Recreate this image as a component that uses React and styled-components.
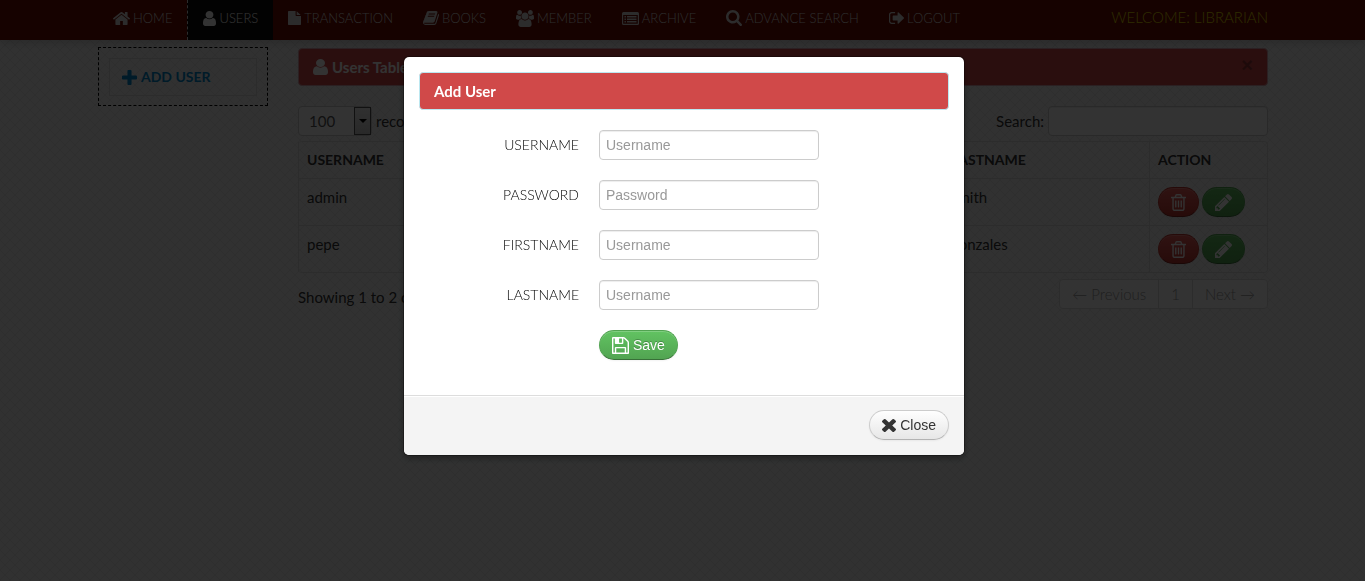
import React from 'react';
import styled, { createGlobalStyle, css } from 'styled-components';

const GlobalStyle = createGlobalStyle`
  *, *::before, *::after {
    box-sizing: border-box;
  }

  body {
    margin: 0;
    min-height: 100vh;
    background-color: #f5f6f6;
    background-image:
      linear-gradient(45deg, transparent 46%, rgba(0, 0, 0, 0.07) 46% 54%, transparent 54%),
      linear-gradient(-45deg, transparent 46%, rgba(0, 0, 0, 0.07) 46% 54%, transparent 54%);
    background-size: 10px 10px;
    color: #333;
    font-family: 'Century Gothic', Lato, sans-serif;
    font-size: 14px;
    line-height: 20px;
  }
`;

// Icons, each cropped to its own glyph box
const ICONS = {
  home: {
    box: '90 250 1612 1290',
    d: 'M1472 992v480q0 26-19 45t-45 19h-384v-384h-256v384h-384q-26 0-45-19t-19-45v-480q0-1 .5-3t.5-3l575-474 575 474q1 2 1 6zm223-69l-62 74q-8 9-21 11h-3q-13 0-21-7l-692-577-692 577q-12 8-24 7-13-2-21-11l-62-74q-8-10-7-23.5t11-21.5l719-599q32-26 76-26t76 26l244 204v-195q0-14 9-23t23-9h192q14 0 23 9t9 23v408l219 182q10 8 11 21.5t-7 23.5z',
  },
  user: {
    box: '256 128 1280 1536',
    d: 'M1536 1399q0 109-62.5 187t-150.5 78h-854q-88 0-150.5-78t-62.5-187q0-85 8.5-160.5t31.5-152 58.5-131 94-89 134.5-34.5q131 128 313 128t313-128q76 0 134.5 34.5t94 89 58.5 131 31.5 152 8.5 160.5zm-256-887q0 159-112.5 271.5t-271.5 112.5-271.5-112.5-112.5-271.5 112.5-271.5 271.5-112.5 271.5 112.5 112.5 271.5z',
  },
  file: {
    box: '128 0 1536 1792',
    d: 'M1152 512v-472q22 14 36 28l408 408q14 14 28 36h-472zm-128 32q0 40 28 68t68 28h544v1056q0 40-28 68t-68 28h-1344q-40 0-68-28t-28-68v-1600q0-40 28-68t68-28h800v544z',
  },
  book: {
    box: '60 120 1670 1550',
    d: 'M1703 478q40 57 18 129l-275 906q-19 64-76.5 107.5t-122.5 43.5h-923q-77 0-148.5-53.5t-99.5-131.5q-24-67-2-127 0-4 3-27t4-37q1-8-3-21.5t-3-19.5q2-11 8-21t16.5-23.5 16.5-23.5q23-38 45-91.5t30-91.5q3-10 .5-30t-.5-28q3-11 17-28t17-23q21-36 42-92t25-90q1-9-2.5-32t.5-28q4-13 22-30.5t22-22.5q19-26 42.5-84.5t27.5-96.5q1-8-3-25.5t-2-26.5q2-8 9-18t18-23 17-21q8-12 16.5-30.5t15-35 16-36 19.5-32 26.5-23.5 36-11.5 47.5 5.5l-1 3q38-9 51-9h761q74 0 114 56t18 130l-274 906q-36 119-71.5 153.5t-128.5 34.5h-869q-27 0-38 15-11 16-1 43 24 70 144 70h923q29 0 56-15.5t35-41.5l300-987q7-22 5-57 38 15 59 43zm-1064 2q-4 13 2 22.5t20 9.5h608q13 0 25.5-9.5t16.5-22.5l21-64q4-13-2-22.5t-20-9.5h-608q-13 0-25.5 9.5t-16.5 22.5zm-83 256q-4 13 2 22.5t20 9.5h608q13 0 25.5-9.5t16.5-22.5l21-64q4-13-2-22.5t-20-9.5h-608q-13 0-25.5 9.5t-16.5 22.5z',
  },
  group: {
    box: '0 0 1920 1792',
    d: 'M593 896q-162 5-265 128h-134q-82 0-138-40.5t-56-118.5q0-353 124-353 6 0 43.5 21t97.5 42.5 119 21.5q67 0 133-23-5 37-5 66 0 139 81 256zm1071 637q0 120-73 189.5t-194 69.5h-874q-121 0-194-69.5t-73-189.5q0-53 3.5-103.5t14-109 26.5-108.5 43-97.5 62-81 85.5-53.5 111.5-20q10 0 43 21.5t73 48 107 48 135 21.5 135-21.5 107-48 73-48 43-21.5q61 0 111.5 20t85.5 53.5 62 81 43 97.5 26.5 108.5 14 109 3.5 103.5zm-1024-1277q0 106-75 181t-181 75-181-75-75-181 75-181 181-75 181 75 75 181zm704 384q0 159-112.5 271.5t-271.5 112.5-271.5-112.5-112.5-271.5 112.5-271.5 271.5-112.5 271.5 112.5 112.5 271.5zm576 225q0 78-56 118.5t-138 40.5h-134q-103-123-265-128 81-117 81-256 0-29-5-66 66 23 133 23 59 0 119-21.5t97.5-42.5 43.5-21q124 0 124 353zm-128-609q0 106-75 181t-181 75-181-75-75-181 75-181 181-75 181 75 75 181z',
  },
  list: {
    box: '0 0 17 13',
    d: 'M1.500 0h14a1.500 1.500 0 0 1 1.500 1.500v10a1.500 1.500 0 0 1-1.500 1.500h-14a1.500 1.500 0 0 1-1.500-1.500v-10a1.500 1.500 0 0 1 1.500-1.500zM1.200 3v8.300q0 .5.5.5h13.600q.5 0 .5-.5v-8.300zM2.500 4h1.400v1.400h-1.400zM5 4h9.500v1.400h-9.500zM2.500 6.500h1.400v1.400h-1.400zM5 6.500h9.500v1.400h-9.500zM2.500 9h1.400v1.400h-1.400zM5 9h9.500v1.400h-9.500z',
  },
  search: {
    box: '64 128 1664 1664',
    d: 'M1216 832q0-185-131.500-316.500t-316.500-131.500-316.500 131.500-131.500 316.500 131.500 316.500 316.500 131.500 316.500-131.500 131.500-316.500zm512 832q0 52-38 90t-90 38q-54 0-90-38l-343-342q-179 124-399 124-143 0-273.500-55.500t-225-150-150-225-55.500-273.500 55.500-273.500 150-225 225-150 273.500-55.500 273.500 55.500 225 150 150 225 55.500 273.500q0 220-124 399l343 343q37 37 37 90z',
  },
  signOut: {
    box: '64 256 1568 1280',
    d: 'M704 1440q0 4 1 20t.5 26.500-3 23.500-10 19.500-20.500 6.500h-320q-119 0-203.500-84.500t-84.500-203.500v-704q0-119 84.500-203.500t203.500-84.500h320q13 0 22.500 9.500t9.500 22.500q0 4 1 20t.5 26.500-3 23.500-10 19.500-20.500 6.500h-320q-66 0-113 47t-47 113v704q0 66 47 113t113 47h312l11.500 1 11.500 3 8 5.500 7 9 2 13.500zm928-544q0 26-19 45l-544 544q-19 19-45 19t-45-19-19-45v-288h-448q-26 0-45-19t-19-45v-384q0-26 19-45t45-19h448v-288q0-26 19-45t45-19 45 19l544 544q19 19 19 45z',
  },
  plus: {
    box: '192 128 1408 1408',
    d: 'M1600 736v192q0 40-28 68t-68 28h-416v416q0 40-28 68t-68 28h-192q-40 0-68-28t-28-68v-416h-416q-40 0-68-28t-28-68v-192q0-40 28-68t68-28h416v-416q0-40 28-68t68-28h192q40 0 68 28t28 68v416h416q40 0 68 28t28 68z',
  },
  remove: {
    box: '302 366 1188 1188',
    d: 'M1490 1322q0 40-28 68l-136 136q-28 28-68 28t-68-28l-294-294-294 294q-28 28-68 28t-68-28l-136-136q-28-28-28-68t28-68l294-294-294-294q-28-28-28-68t28-68l136-136q28-28 68-28t68 28l294 294 294-294q28-28 68-28t68 28l136 136q28 28 28 68t-28 68l-294 294 294 294q28 28 28 68z',
  },
  save: {
    box: '128 128 1536 1536',
    d: 'M512 1536h768v-384h-768v384zm896 0h128v-896q0-14-10-38.500t-20-34.500l-281-281q-10-10-34-20t-39-10v416q0 40-28 68t-68 28h-576q-40 0-68-28t-28-68v-416h-128v1280h128v-416q0-40 28-68t68-28h832q40 0 68 28t28 68v416zm-384-928v-320q0-13-9.500-22.500t-22.500-9.500h-192q-13 0-22.500 9.500t-9.500 22.500v320q0 13 9.500 22.500t22.500 9.500h192q13 0 22.500-9.500t9.500-22.500zm640 32v928q0 40-28 68t-68 28h-1344q-40 0-68-28t-28-68v-1344q0-40 28-68t68-28h928q40 0 88 20t76 48l280 280q28 28 48 76t20 88z',
  },
  trash: {
    box: '192 128 1408 1536',
    d: 'M704 736v576q0 14-9 23t-23 9h-64q-14 0-23-9t-9-23v-576q0-14 9-23t23-9h64q14 0 23 9t9 23zm256 0v576q0 14-9 23t-23 9h-64q-14 0-23-9t-9-23v-576q0-14 9-23t23-9h64q14 0 23 9t9 23zm256 0v576q0 14-9 23t-23 9h-64q-14 0-23-9t-9-23v-576q0-14 9-23t23-9h64q14 0 23 9t9 23zm128 724v-948h-896v948q0 22 7 40.500t14.500 27 10.500 8.500h832q3 0 10.500-8.500t14.500-27 7-40.500zm-672-1076h448l-48-117q-7-9-17-11h-317q-10 2-17 11zm928 32v64q0 14-9 23t-23 9h-96v948q0 83-47 143.500t-113 60.500h-832q-66 0-113-58.500t-47-141.500v-952h-96q-14 0-23-9t-9-23v-64q0-14 9-23t23-9h309l70-167q15-37 54-63t79-26h320q40 0 79 26t54 63l70 167h309q14 0 23 9t9 23z',
  },
  pencil: {
    box: '128 149 1515 1515',
    d: 'M491 1536l91-91-235-235-91 91v107h128v128h107zm523-928q0-22-22-22-10 0-17 7l-542 542q-7 7-7 17 0 22 22 22 10 0 17-7l542-542q7-7 7-17zm-54-192l416 416-832 832h-416v-416zm683 96q0 53-37 90l-166 166-416-416 166-165q36-38 90-38 53 0 91 38l235 234q37 39 37 91z',
  },
};

const Glyph = styled.svg`
  flex: none;
  fill: currentColor;
`;

const Icon = ({ name, width, height }) => (
  <Glyph
    width={width}
    height={height}
    viewBox={ICONS[name].box}
    preserveAspectRatio="none"
    aria-hidden="true"
  >
    <path fillRule="evenodd" d={ICONS[name].d} />
  </Glyph>
);

// Navigation bar
const Navbar = styled.header`
  background: #6e0c00;
  box-shadow: 0 1px 10px rgba(0, 0, 0, 0.2);
`;

const Container = styled.div`
  display: flex;
  max-width: 1171px;
  margin: 0 auto;
  padding-left: 1px;
`;

const NavList = styled.nav`
  display: flex;
  flex: 1;
`;

const NavLink = styled.a`
  display: flex;
  align-items: center;
  gap: 3px;
  height: 40px;
  padding: 0 15px 4px;
  color: ${({ $active }) => ($active ? '#fff' : '#ddd')};
  font-size: 13px;
  font-weight: 300;
  text-decoration: none;
  white-space: nowrap;

  ${({ $active }) => $active && css`
    background: #0a0a0a;
    border-left: 1px dashed #ddd;
  `}
`;

const Welcome = styled.div`
  color: #e0d800;
  font-size: 15px;
  font-weight: 300;
  line-height: 34px;
  white-space: nowrap;
`;

// Page columns
const Columns = styled(Container)`
  align-items: flex-start;
  gap: 30px;
  padding-top: 7px;
`;

const Sidebar = styled.aside`
  flex: none;
  width: 170px;
  padding: 10px 10px 9px;
  border: 1px dashed #000;
`;

const AddUserLink = styled.a`
  display: flex;
  align-items: center;
  gap: 4px;
  height: 38px;
  padding: 0 12px;
  border: 1px solid #ddd;
  color: #0088cc;
  font-weight: 700;
  text-decoration: none;
`;

const Main = styled.main`
  flex: 1;
  min-width: 0;
  padding-top: 1px;
`;

const Banner = styled.div`
  display: flex;
  align-items: center;
  gap: 4px;
  height: 38px;
  margin-bottom: 20px;
  padding: 0 14px 1px;
  border: 1px solid ${({ $tone }) => ($tone === 'info' ? '#bce8f1' : '#d6a0a8')};
  border-radius: 4px;
  background: #d04949;
  color: #fff;
  font-size: 15px;
  font-weight: 700;
`;

const Dismiss = styled.button`
  margin-left: auto;
  padding: 0 0 4px;
  border: 0;
  background: none;
  color: #000;
  font: bold 20px/20px 'Liberation Sans', sans-serif;
  opacity: 0.3;
`;

const Toolbar = styled.div`
  display: flex;
  justify-content: space-between;
  margin-bottom: 5px;
`;

const Field = styled.label`
  display: flex;
  align-items: center;
  gap: 4px;
  font-size: 15px;
`;

const TextInput = styled.input`
  width: 220px;
  height: 30px;
  padding: 4px 6px;
  border: 1px solid #ccc;
  border-radius: 4px;
  background: #fff;
  box-shadow: inset 0 1px 1px rgba(0, 0, 0, 0.075);
  color: #555;
  font: 14px/20px 'Liberation Sans', sans-serif;

  &::placeholder {
    color: #999;
    opacity: 1;
  }
`;

const SelectBox = styled.span`
  display: flex;
  width: 74px;
  height: 30px;
  border: 1px solid #ccc;
  border-radius: 4px;
  background: #fff;
`;

const Select = styled.select`
  flex: 1;
  min-width: 0;
  padding: 0 10px;
  border: 0;
  appearance: none;
  background: none;
  color: #555;
  font: inherit;
`;

const SelectArrow = styled.span`
  display: grid;
  place-items: center;
  width: 17px;
  border: 1px solid #555;
  background: linear-gradient(#f0f0f0, #ccc);
  color: #000;
`;

// Users table
const Table = styled.table`
  width: 100%;
  border: 1px solid #ddd;
  border-left: 0;
  border-radius: 4px;
  border-spacing: 0;
  table-layout: fixed;
  font-size: 15px;
  text-align: left;
`;

const Cell = styled.td`
  padding: 8px;
  border-left: 1px solid #ddd;
  border-top: 1px solid #ddd;
  vertical-align: top;
`;

const HeadCell = styled.th`
  width: ${({ $width }) => $width || 'auto'};
  padding: 8px;
  border-left: 1px solid #ddd;
  font-size: 14px;
  font-weight: 700;
`;

const Actions = styled.div`
  display: flex;
  gap: 3px;
`;

const BUTTON_TONES = {
  plain: css`
    background: linear-gradient(#fff, #e6e6e6);
    border-color: #ccc #ccc #b3b3b3;
    color: #333;
  `,
  success: css`
    background: linear-gradient(#62c462, #51a351);
    border-color: #51a351 #51a351 #387038;
    color: #fff;
    text-shadow: 0 -1px 0 rgba(0, 0, 0, 0.25);
  `,
  danger: css`
    background: linear-gradient(#ee5f5b, #bd362f);
    border-color: #bd362f #bd362f #802420;
    color: #fff;
  `,
};

const Button = styled.button`
  display: inline-flex;
  align-items: center;
  gap: 4px;
  height: 30px;
  padding: 0 12px;
  border: 1px solid;
  border-radius: 15px;
  box-shadow: inset 0 1px 0 rgba(255, 255, 255, 0.2), 0 1px 2px rgba(0, 0, 0, 0.05);
  font: 14px/20px 'Liberation Sans', sans-serif;
  ${({ $tone }) => BUTTON_TONES[$tone]}
  background-origin: border-box;
`;

const TableFooter = styled.div`
  display: flex;
  justify-content: space-between;
  align-items: flex-start;
  padding-top: 6px;
  font-size: 15px;
`;

const Info = styled.div`
  padding-top: 8px;
`;

const Pager = styled.div`
  display: flex;
  border: 1px solid #ddd;
  border-radius: 4px;
  background: #fff;
`;

const PageLink = styled.a`
  padding: 4px 12px;
  color: #999;
  font-weight: 300;
  line-height: 20px;
  text-decoration: none;

  & + & {
    border-left: 1px solid #ddd;
  }
`;

// Modal
const Backdrop = styled.div`
  position: fixed;
  inset: 0;
  display: flex;
  align-items: flex-start;
  justify-content: center;
  padding: 56px 0 0 3px;
  background: rgba(0, 0, 0, 0.8);
`;

const Modal = styled.div`
  width: 562px;
  border: 1px solid rgba(0, 0, 0, 0.3);
  border-radius: 6px;
  background: #fff;
  background-clip: padding-box;
  box-shadow: 0 3px 7px rgba(0, 0, 0, 0.3);
  overflow: hidden;
`;

const ModalBody = styled.form`
  padding: 15px;
`;

const FormRow = styled.div`
  display: grid;
  grid-template-columns: 160px 1fr;
  column-gap: 20px;
  align-items: center;
  justify-items: start;
  margin-bottom: 20px;
`;

const FormLabel = styled.label`
  justify-self: end;
  color: #000;
  font-weight: 300;
`;

const FormActions = styled.div`
  grid-column: 2;
  display: flex;
`;

const ModalFooter = styled.div`
  display: flex;
  justify-content: flex-end;
  padding: 14px 15px 15px;
  border-top: 1px solid #ddd;
  background: #f4f4f4;
  box-shadow: inset 0 1px 0 #fff;
`;

const NAV_ITEMS = [
  { label: 'HOME', icon: 'home', width: 17, height: 13 },
  { label: 'USERS', icon: 'user', width: 13, height: 15, active: true },
  { label: 'TRANSACTION', icon: 'file', width: 13, height: 14 },
  { label: 'BOOKS', icon: 'book', width: 16, height: 14 },
  { label: 'MEMBER', icon: 'group', width: 18, height: 17 },
  { label: 'ARCHIVE', icon: 'list', width: 17, height: 13 },
  { label: 'ADVANCE SEARCH', icon: 'search', width: 16, height: 16 },
  { label: 'LOGOUT', icon: 'signOut', width: 15, height: 12 },
];

const USERS = [
  { username: 'admin', password: 'admin', firstname: 'john', lastname: 'smith' },
  { username: 'pepe', password: 'pepe', firstname: 'pepe', lastname: 'gonzales' },
];

const FORM_FIELDS = [
  { id: 'username', label: 'USERNAME', placeholder: 'Username' },
  { id: 'password', label: 'PASSWORD', placeholder: 'Password', type: 'password' },
  { id: 'firstname', label: 'FIRSTNAME', placeholder: 'Username' },
  { id: 'lastname', label: 'LASTNAME', placeholder: 'Username' },
];

const UsersTable = () => (
  <Table>
    <thead>
      <tr>
        <HeadCell $width="118px">USERNAME</HeadCell>
        <HeadCell>PASSWORD</HeadCell>
        <HeadCell $width="118px">FIRSTNAME</HeadCell>
        <HeadCell $width="207px">LASTNAME</HeadCell>
        <HeadCell $width="118px">ACTION</HeadCell>
      </tr>
    </thead>
    <tbody>
      {USERS.map((user) => (
        <tr key={user.username}>
          <Cell>{user.username}</Cell>
          <Cell>{user.password}</Cell>
          <Cell>{user.firstname}</Cell>
          <Cell>{user.lastname}</Cell>
          <Cell>
            <Actions>
              <Button type="button" $tone="danger" aria-label="Delete">
                <Icon name="trash" width={15} height={17} />
              </Button>
              <Button type="button" $tone="success" aria-label="Edit">
                <Icon name="pencil" width={17} height={17} />
              </Button>
            </Actions>
          </Cell>
        </tr>
      ))}
    </tbody>
  </Table>
);

const AddUserModal = () => (
  <Backdrop>
    <Modal role="dialog" aria-modal="true" aria-label="Add User">
      <ModalBody>
        <Banner $tone="info">Add User</Banner>
        {FORM_FIELDS.map(({ id, label, placeholder, type = 'text' }) => (
          <FormRow key={id}>
            <FormLabel htmlFor={id}>{label}</FormLabel>
            <TextInput id={id} type={type} placeholder={placeholder} />
          </FormRow>
        ))}
        <FormRow>
          <FormActions>
            <Button type="button" $tone="success">
              <Icon name="save" width={17} height={17} />
              Save
            </Button>
          </FormActions>
        </FormRow>
      </ModalBody>
      <ModalFooter>
        <Button type="button" $tone="plain">
          <Icon name="remove" width={14} height={13} />
          Close
        </Button>
      </ModalFooter>
    </Modal>
  </Backdrop>
);

const App = () => (
  <>
    <GlobalStyle />
    <Navbar>
      <Container>
        <NavList>
          {NAV_ITEMS.map(({ label, icon, width, height, active }) => (
            <NavLink key={label} href="#" $active={active}>
              <Icon name={icon} width={width} height={height} />
              {label}
            </NavLink>
          ))}
        </NavList>
        <Welcome>WELCOME: LIBRARIAN</Welcome>
      </Container>
    </Navbar>
    <Columns>
      <Sidebar>
        <AddUserLink href="#">
          <Icon name="plus" width={15} height={15} />
          ADD USER
        </AddUserLink>
      </Sidebar>
      <Main>
        <Banner>
          <Icon name="user" width={15} height={16} />
          Users Table
          <Dismiss type="button" aria-label="Dismiss">×</Dismiss>
        </Banner>
        <Toolbar>
          <Field>
            <SelectBox>
              <Select defaultValue="100">
                <option value="100">100</option>
              </Select>
              <SelectArrow aria-hidden="true">
                <svg width="8" height="4" viewBox="0 0 8 4"><path d="M0 0h8l-4 4z" /></svg>
              </SelectArrow>
            </SelectBox>
            records per page
          </Field>
          <Field>
            Search:
            <TextInput type="text" />
          </Field>
        </Toolbar>
        <UsersTable />
        <TableFooter>
          <Info>Showing 1 to 2 of 2 records</Info>
          <Pager>
            <PageLink href="#">← Previous</PageLink>
            <PageLink href="#">1</PageLink>
            <PageLink href="#">Next →</PageLink>
          </Pager>
        </TableFooter>
      </Main>
    </Columns>
    <AddUserModal />
  </>
);

export default App;
